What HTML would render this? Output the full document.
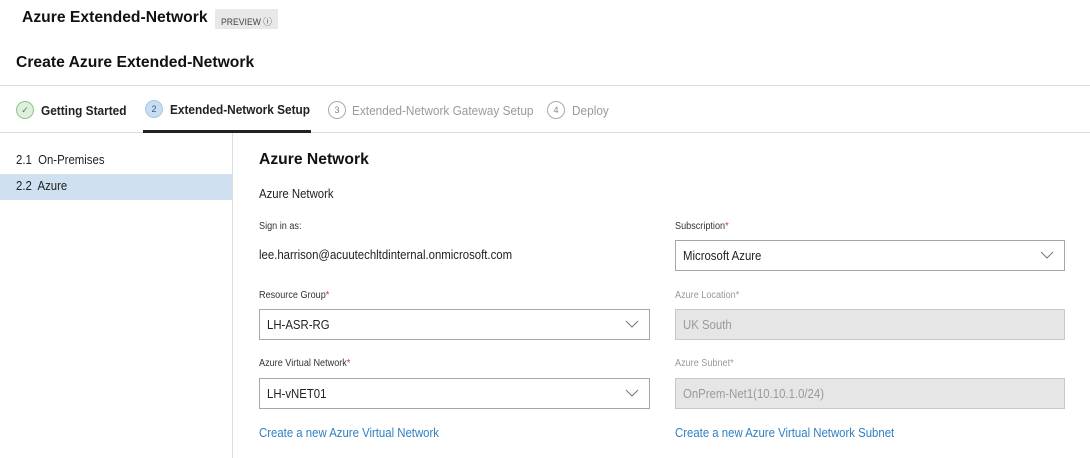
<!DOCTYPE html>
<html><head><meta charset="utf-8"><style>
body{margin:0;width:1090px;height:458px;background:#fff;font-family:"Liberation Sans",sans-serif;color:#222;position:relative;overflow:hidden}
.a{position:absolute;white-space:nowrap;transform:scaleX(.91);transform-origin:0 50%}
.t{transform:scaleX(.98)}
.b{position:absolute}
.box{position:absolute;border:1px solid #a6a6a6;box-sizing:border-box;height:31px;background:#fff}
.box span{position:absolute;left:7px;top:8px;font-size:12.5px;transform:scaleX(.91);transform-origin:0 50%;white-space:nowrap}
.dis{background:#e6e6e6;border-color:#c8c8c8;color:#9a9a9a}
.lab{font-size:10px;color:#333}
.st{color:#d13438}
.chev{position:absolute;right:10px;top:9px}
.circ{position:absolute;width:18px;height:18px;border-radius:50%;box-sizing:border-box;font-size:9px;text-align:center;line-height:16px}
a{color:#2f7fc1}
</style></head><body>
<div class="a t" style="left:22px;top:9px;font-size:16px;font-weight:bold;color:#111">Azure Extended-Network</div>
<div class="b" style="left:215px;top:9px;width:63px;height:20px;background:#e8e8e8"></div>
<div class="a" style="left:221px;top:14px;font-size:9.5px;color:#444">PREVIEW ⓘ</div>
<div class="a t" style="left:16px;top:54px;font-size:16px;font-weight:bold;color:#111">Create Azure Extended-Network</div>
<div class="b" style="left:0;top:85px;width:1090px;height:1px;background:#ddd"></div>
<div class="circ" style="left:16px;top:101px;background:#dfeedd;border:1px solid #8fc48a;color:#3a8a3a">✓</div>
<div class="a" style="left:41px;top:103px;font-size:13px;font-weight:bold">Getting Started</div>
<div class="circ" style="left:145px;top:100px;background:#c9dcf0;border:1px solid #aac6e6;color:#2a5f9e">2</div>
<div class="a" style="left:170px;top:102px;font-size:13px;font-weight:bold">Extended-Network Setup</div>
<div class="circ" style="left:328px;top:101px;border:1px solid #aaa;color:#888">3</div>
<div class="a" style="left:352px;top:103px;font-size:13px;color:#9a9a9a">Extended-Network Gateway Setup</div>
<div class="circ" style="left:547px;top:101px;border:1px solid #aaa;color:#888">4</div>
<div class="a" style="left:572px;top:103px;font-size:13px;color:#9a9a9a">Deploy</div>
<div class="b" style="left:0;top:132px;width:1090px;height:1px;background:#ddd"></div>
<div class="b" style="left:143px;top:130px;width:168px;height:3px;background:#222"></div>
<div class="b" style="left:232px;top:133px;width:1px;height:325px;background:#ddd"></div>
<div class="a" style="left:16px;top:153px;font-size:12.5px">2.1&nbsp; On-Premises</div>
<div class="b" style="left:0;top:174px;width:232px;height:26px;background:#cfe0f0"></div>
<div class="a" style="left:16px;top:179px;font-size:12.5px">2.2&nbsp; Azure</div>
<div class="a t" style="left:259px;top:151px;font-size:16px;font-weight:bold;color:#111">Azure Network</div>
<div class="a" style="left:259px;top:187px;font-size:12.5px">Azure Network</div>
<div class="a lab" style="left:259px;top:221px">Sign in as:</div>
<div class="a" style="left:259px;top:248px;font-size:12.5px">lee.harrison@acuutechltdinternal.onmicrosoft.com</div>
<div class="a lab" style="left:675px;top:221px">Subscription<span class="st">*</span></div>
<div class="box" style="left:675px;top:240px;width:390px"><span>Microsoft Azure</span><svg class="chev" width="14" height="10"><path d="M1 2l6 6 6-6" fill="none" stroke="#777" stroke-width="1"/></svg></div>
<div class="a lab" style="left:259px;top:290px">Resource Group<span class="st">*</span></div>
<div class="box" style="left:259px;top:309px;width:391px"><span>LH-ASR-RG</span><svg class="chev" width="14" height="10"><path d="M1 2l6 6 6-6" fill="none" stroke="#777" stroke-width="1"/></svg></div>
<div class="a lab" style="left:675px;top:290px;color:#999">Azure Location<span style="color:#999">*</span></div>
<div class="box dis" style="left:675px;top:309px;width:390px"><span>UK South</span></div>
<div class="a lab" style="left:259px;top:358px">Azure Virtual Network<span class="st">*</span></div>
<div class="box" style="left:259px;top:378px;width:391px"><span>LH-vNET01</span><svg class="chev" width="14" height="10"><path d="M1 2l6 6 6-6" fill="none" stroke="#777" stroke-width="1"/></svg></div>
<div class="a lab" style="left:675px;top:358px;color:#999">Azure Subnet*</div>
<div class="box dis" style="left:675px;top:378px;width:390px"><span>OnPrem-Net1(10.10.1.0/24)</span></div>
<div class="a" style="left:259px;top:426px;font-size:12.5px"><a>Create a new Azure Virtual Network</a></div>
<div class="a" style="left:675px;top:426px;font-size:12.5px"><a>Create a new Azure Virtual Network Subnet</a></div>
</body></html>
